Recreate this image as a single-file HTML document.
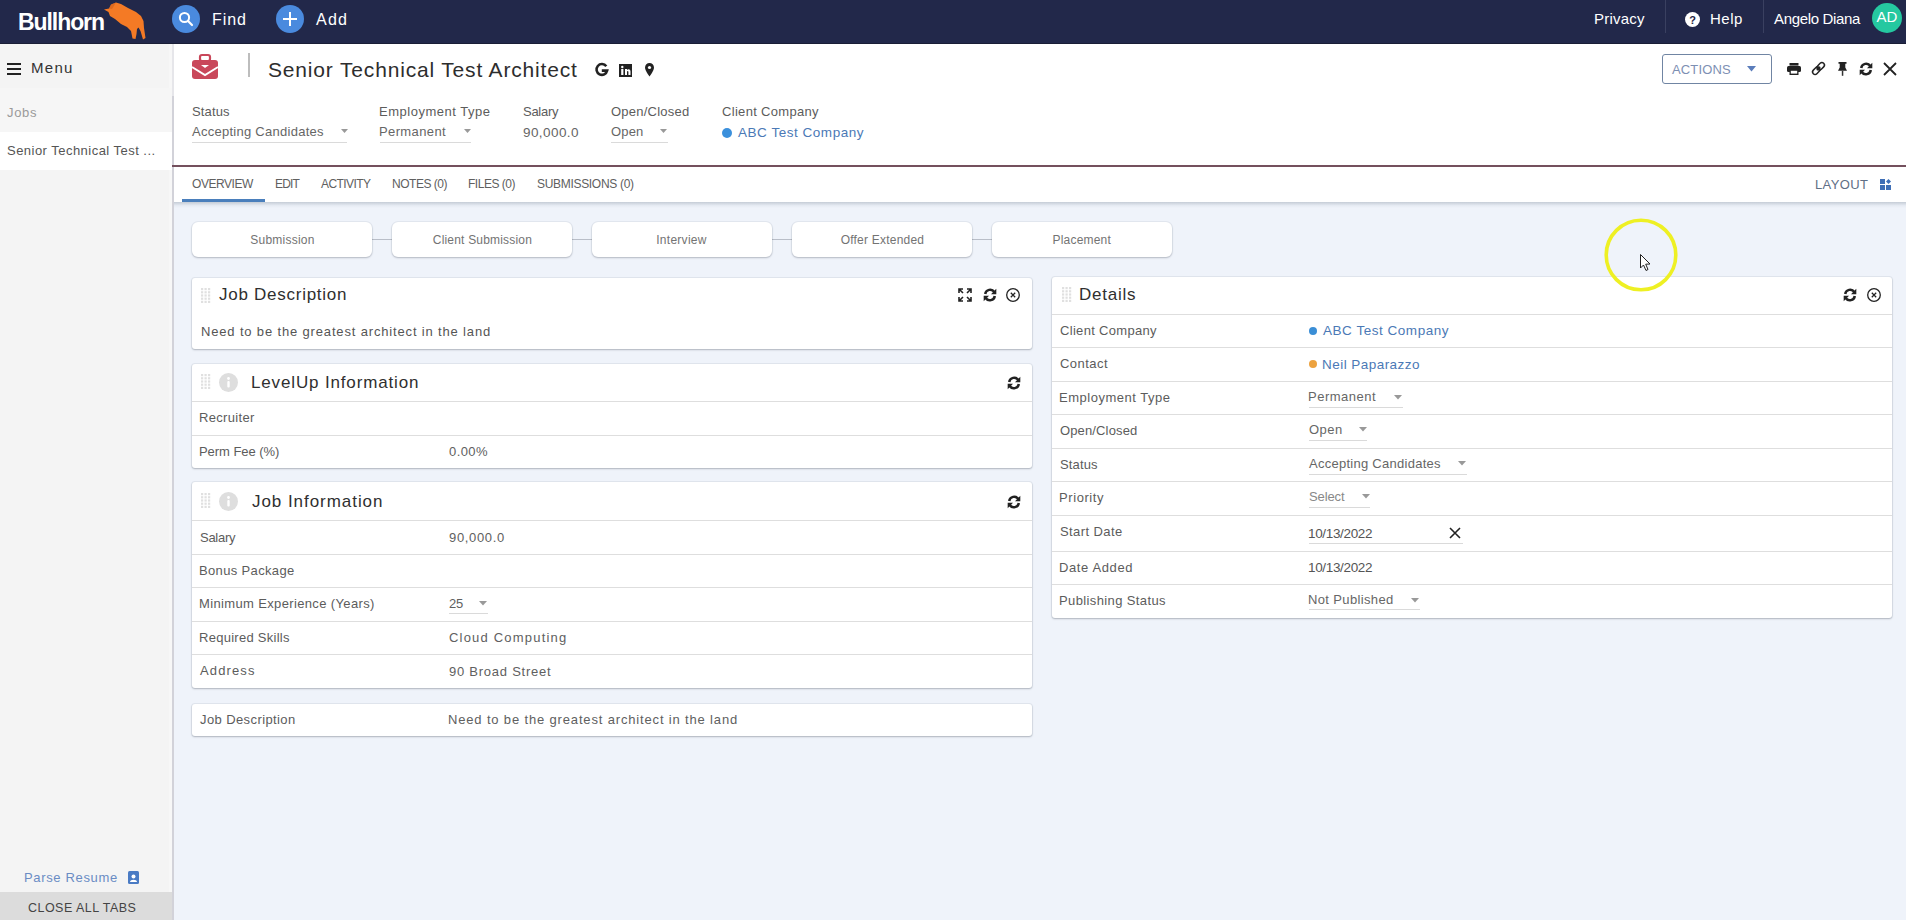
<!DOCTYPE html>
<html><head><meta charset="utf-8"><title>Bullhorn</title>
<style>
html,body{margin:0;padding:0;width:1906px;height:920px;overflow:hidden;background:#eff3fa;}
body{position:relative;font-family:"Liberation Sans", sans-serif;}
.t{position:absolute;white-space:nowrap;line-height:1;font-family:"Liberation Sans", sans-serif;}
.r{position:absolute;box-sizing:border-box;}
svg.r{overflow:visible;}
.stage{background:#fff;border-radius:6px;box-shadow:0 1px 2px rgba(40,45,60,.26),0 0 0 1px rgba(40,50,70,.05);}
.card{background:#fff;border-radius:3px;box-shadow:0 1px 2px rgba(40,45,60,.28),0 0 0 1px rgba(40,50,70,.06);}
</style></head><body>
<div class="r" style="left:0px;top:0px;width:1906px;height:920px;background:#eff3fa;"></div>
<div class="r" style="left:0px;top:0px;width:1906px;height:44px;background:#22284a;"></div>
<div class="r" style="left:0px;top:43px;width:1906px;height:1px;background:#1a1e36;"></div>
<div class="r" style="left:0px;top:44px;width:172px;height:876px;background:#f4f4f4;"></div>
<div class="r" style="left:169px;top:44px;width:3px;height:876px;background:#f7f7f7;"></div>
<div class="r" style="left:172px;top:44px;width:2px;height:876px;background:#d2d2d9;"></div>
<div class="r" style="left:172px;top:44px;width:2px;height:52px;background:#e6e6ea;"></div>
<div class="r" style="left:0px;top:88px;width:172px;height:44px;background:#f6f6f6;"></div>
<div class="r" style="left:0px;top:132px;width:172px;height:38px;background:#ffffff;"></div>
<div class="r" style="left:0px;top:892px;width:172px;height:28px;background:#dcdcdc;"></div>
<div class="r" style="left:174px;top:44px;width:1732px;height:121px;background:#ffffff;"></div>
<div class="r" style="left:174px;top:167px;width:1732px;height:35px;background:#ffffff;"></div>
<div class="r" style="left:172px;top:165px;width:1734px;height:2px;background:#74505d;"></div>
<div class="r" style="left:174px;top:202px;width:1732px;height:6px;background:linear-gradient(#c5ccd6,#e6ebf3 60%,#eff3fa)"></div>
<div class="t" style="left:18.00px;top:11px;font-size:23px;color:#ffffff;font-weight:700;letter-spacing:-1.070px;">Bullhorn</div>
<svg class="r" style="left:100px;top:0px;" width="50" height="44" viewBox="0 0 50 44"><path d="M4 9.5 L9 8.5 L11 4.5 L16 2.5 L21 4 L28 8 L36 12 L41 16 L43.5 21 L44 28 L45.5 38 L43 39.5 L40.5 31 L38.5 27.5 L37 29 L36.5 34 L35.5 39 L32.5 38.5 L31 31 L27 27 L21 24 L15 19 L10 16 L8.5 12 Z" fill="#f47a25"/><path d="M9 8.5 L11 4.5 L16 2.5 L12 9 Z" fill="#c85a1a" opacity="0.5"/></svg>
<svg class="r" style="left:172px;top:5px;" width="28" height="28" viewBox="0 0 28 28"><circle cx="14" cy="14" r="14" fill="#4a8ade"/><circle cx="12.5" cy="12.5" r="4.6" fill="none" stroke="#fff" stroke-width="2"/><line x1="16" y1="16" x2="20" y2="20" stroke="#fff" stroke-width="2.2" stroke-linecap="round"/></svg>
<div class="t" style="left:212.00px;top:12px;font-size:16px;color:#ffffff;letter-spacing:0.924px;">Find</div>
<svg class="r" style="left:276px;top:5px;" width="28" height="28" viewBox="0 0 28 28"><circle cx="14" cy="14" r="14" fill="#4a8ade"/><line x1="7" y1="14" x2="21" y2="14" stroke="#fff" stroke-width="2"/><line x1="14" y1="7" x2="14" y2="21" stroke="#fff" stroke-width="2"/></svg>
<div class="t" style="left:316.00px;top:12px;font-size:16px;color:#ffffff;letter-spacing:1.215px;">Add</div>
<div class="t" style="left:1594.00px;top:11px;font-size:15px;color:#ffffff;letter-spacing:0.221px;">Privacy</div>
<div class="r" style="left:1665px;top:0px;width:1px;height:33px;background:#3a4060;"></div>
<svg class="r" style="left:1685px;top:12px;" width="15" height="15" viewBox="0 0 15 15"><circle cx="7.5" cy="7.5" r="7.5" fill="#fff"/><text x="7.5" y="12" text-anchor="middle" font-family="Liberation Sans" font-weight="700" font-size="11" fill="#1e2443">?</text></svg>
<div class="t" style="left:1710.00px;top:11px;font-size:15px;color:#ffffff;letter-spacing:0.498px;">Help</div>
<div class="r" style="left:1763px;top:0px;width:1px;height:33px;background:#3a4060;"></div>
<div class="t" style="left:1774.00px;top:11px;font-size:15px;color:#ffffff;letter-spacing:-0.339px;">Angelo Diana</div>
<svg class="r" style="left:1872px;top:3px;" width="30" height="30" viewBox="0 0 30 30"><circle cx="15" cy="15" r="15" fill="#25c8a0"/><text x="15" y="19" text-anchor="middle" font-family="Liberation Sans" font-size="15" fill="#fff">AD</text></svg>
<svg class="r" style="left:7px;top:63px;" width="15" height="12" viewBox="0 0 15 12"><rect x="0" y="0" width="14" height="2" fill="#222"/><rect x="0" y="5" width="14" height="2" fill="#222"/><rect x="0" y="10" width="14" height="2" fill="#222"/></svg>
<div class="t" style="left:31.00px;top:60px;font-size:15px;color:#333;letter-spacing:1.273px;">Menu</div>
<div class="t" style="left:7.00px;top:106px;font-size:13px;color:#9a9a9a;letter-spacing:0.680px;">Jobs</div>
<div class="t" style="left:7.00px;top:144px;font-size:13px;color:#555;letter-spacing:0.472px;">Senior Technical Test ...</div>
<div class="t" style="left:24.00px;top:871px;font-size:13px;color:#6a8cc4;letter-spacing:0.659px;">Parse Resume</div>
<svg class="r" style="left:128px;top:871px;" width="11" height="13" viewBox="0 0 11 13"><rect x="0" y="0" width="11" height="13" rx="1.5" fill="#4a7bc4"/><circle cx="5.5" cy="5.5" r="2" fill="#fff"/><path d="M2 11 C2 8 9 8 9 11 Z" fill="#fff"/></svg>
<div class="t" style="left:28.00px;top:902px;font-size:12.5px;color:#444;letter-spacing:0.466px;">CLOSE ALL TABS</div>
<svg class="r" style="left:192px;top:54px;" width="26" height="25" viewBox="0 0 26 25"><rect x="8" y="1" width="10" height="6" rx="2" fill="none" stroke="#c9475a" stroke-width="2.2"/><rect x="0" y="6" width="26" height="19" rx="3" fill="#c9475a"/><path d="M0 13 L13 21 L26 13" fill="none" stroke="#fff" stroke-width="2"/><path d="M9 11 L17 11 L13 14 Z" fill="#fff"/></svg>
<div class="r" style="left:248px;top:53px;width:2px;height:24px;background:#bdbdbd;"></div>
<div class="t" style="left:268.00px;top:59px;font-size:21px;color:#2d2d2d;letter-spacing:0.829px;">Senior Technical Test Architect</div>
<svg class="r" style="left:595px;top:63px;" width="13" height="14" viewBox="0 0 13 14"><path d="M11.3 3.3 A5.4 5.4 0 1 0 12.2 7.6 L6.8 7.6" fill="none" stroke="#222" stroke-width="2.6"/></svg>
<svg class="r" style="left:619px;top:63.5px;" width="13" height="13" viewBox="0 0 13 13"><rect x="0" y="0" width="13" height="13" fill="#222"/><rect x="2.2" y="5" width="2.2" height="6" fill="#fff"/><circle cx="3.3" cy="3" r="1.2" fill="#fff"/><path d="M6 11 V5 H8 V6 C9 4.6 11.5 4.8 11.5 7.4 V11 H9.4 V7.8 C9.4 6.6 8 6.6 8 7.8 V11 Z" fill="#fff"/></svg>
<svg class="r" style="left:645px;top:63px;" width="9" height="14" viewBox="0 0 9 14"><path d="M4.5 0 C2 0 0 2 0 4.6 C0 7.8 4.5 13.5 4.5 13.5 C4.5 13.5 9 7.8 9 4.6 C9 2 7 0 4.5 0 Z" fill="#222"/><circle cx="4.5" cy="4.5" r="1.6" fill="#fff"/></svg>
<div class="t" style="left:192.00px;top:105px;font-size:13px;color:#5c5c5c;letter-spacing:0.129px;">Status</div>
<div class="t" style="left:192.00px;top:125px;font-size:13px;color:#666;letter-spacing:0.265px;">Accepting Candidates</div>
<svg class="r" style="left:341px;top:129px;" width="7" height="5" viewBox="0 0 7 5"><path d="M0 0 L7 0 L3.5 4 Z" fill="#999"/></svg>
<div class="r" style="left:192px;top:142px;width:155px;height:1px;background:#dadada;"></div>
<div class="t" style="left:379.00px;top:105px;font-size:13px;color:#5c5c5c;letter-spacing:0.513px;">Employment Type</div>
<div class="t" style="left:379.00px;top:125px;font-size:13px;color:#666;letter-spacing:0.378px;">Permanent</div>
<svg class="r" style="left:464px;top:129px;" width="7" height="5" viewBox="0 0 7 5"><path d="M0 0 L7 0 L3.5 4 Z" fill="#999"/></svg>
<div class="r" style="left:380px;top:142px;width:91px;height:1px;background:#dadada;"></div>
<div class="t" style="left:523.00px;top:105px;font-size:13px;color:#5c5c5c;letter-spacing:-0.270px;">Salary</div>
<div class="t" style="left:523.00px;top:126px;font-size:13.5px;color:#666;letter-spacing:0.423px;">90,000.0</div>
<div class="t" style="left:611.00px;top:105px;font-size:13px;color:#5c5c5c;letter-spacing:0.235px;">Open/Closed</div>
<div class="t" style="left:611.00px;top:125px;font-size:13px;color:#666;letter-spacing:0.143px;">Open</div>
<svg class="r" style="left:660px;top:129px;" width="7" height="5" viewBox="0 0 7 5"><path d="M0 0 L7 0 L3.5 4 Z" fill="#999"/></svg>
<div class="r" style="left:611px;top:142px;width:57px;height:1px;background:#dadada;"></div>
<div class="t" style="left:722.00px;top:105px;font-size:13px;color:#5c5c5c;letter-spacing:0.309px;">Client Company</div>
<svg class="r" style="left:722px;top:128px;" width="10" height="10" viewBox="0 0 10 10"><circle cx="5" cy="5" r="5" fill="#3b90dc"/></svg>
<div class="t" style="left:738.00px;top:126px;font-size:13.5px;color:#4b79b6;letter-spacing:0.530px;">ABC Test Company</div>
<div class="r" style="left:1662px;top:54px;width:110px;height:30px;border:1px solid #7085a3;border-radius:3px;background:#fff"></div>
<div class="t" style="left:1672.00px;top:63px;font-size:13px;color:#7d8fb3;letter-spacing:0.148px;">ACTIONS</div>
<svg class="r" style="left:1747px;top:66px;" width="9" height="6" viewBox="0 0 9 6"><path d="M0 0 L9 0 L4.5 5.5 Z" fill="#5b7dbb"/></svg>
<svg class="r" style="left:1787px;top:63px;" width="14" height="12" viewBox="0 0 14 12"><rect x="2.5" y="0" width="9" height="2.6" fill="#222"/><rect x="0" y="3" width="14" height="6" rx="1.5" fill="#222"/><rect x="2.5" y="6.5" width="9" height="5.5" fill="#222"/><rect x="3.8" y="7.8" width="6.4" height="2.8" fill="#fff"/></svg>
<svg class="r" style="left:1812px;top:62px;" width="13" height="13" viewBox="0 0 13 13"><g fill="none" stroke="#222" stroke-width="1.5" transform="rotate(-45 6.5 6.5)"><rect x="-0.8" y="4" width="8.3" height="5" rx="2.5"/><rect x="5.5" y="4" width="8.3" height="5" rx="2.5"/></g><path d="M4.8 8.2 L8.2 4.8" stroke="#222" stroke-width="1.5"/></svg>
<svg class="r" style="left:1838px;top:62px;" width="9" height="14" viewBox="0 0 9 14"><path d="M0.5 0 H8.5 V1.8 H7.3 V5.5 L9 8.8 H0 L1.7 5.5 V1.8 H0.5 Z" fill="#222"/><rect x="3.8" y="8.8" width="1.5" height="5" fill="#333"/></svg>
<svg class="r" style="left:1859px;top:62px;" width="14" height="14" viewBox="0 0 14 14"><g transform="scale(1.0)"><path d="M2.2 6 A5 5 0 0 1 11.3 4" fill="none" stroke="#222" stroke-width="2.5"/><path d="M13.3 0.8 L13.3 6.2 L8 6.2 Z" fill="#222"/><path d="M11.8 8 A5 5 0 0 1 2.7 10" fill="none" stroke="#222" stroke-width="2.5"/><path d="M0.7 13.2 L0.7 7.8 L6 7.8 Z" fill="#222"/></g></svg>
<svg class="r" style="left:1883px;top:62px;" width="14" height="14" viewBox="0 0 14 14"><path d="M1 1 L13 13 M13 1 L1 13" stroke="#222" stroke-width="1.8"/></svg>
<div class="t" style="left:192.00px;top:178px;font-size:12px;color:#606060;letter-spacing:-0.448px;">OVERVIEW</div>
<div class="t" style="left:275.00px;top:178px;font-size:12px;color:#606060;letter-spacing:-0.835px;">EDIT</div>
<div class="t" style="left:321.00px;top:178px;font-size:12px;color:#606060;letter-spacing:-0.572px;">ACTIVITY</div>
<div class="t" style="left:392.00px;top:178px;font-size:12px;color:#606060;letter-spacing:-0.480px;">NOTES (0)</div>
<div class="t" style="left:468.00px;top:178px;font-size:12px;color:#606060;letter-spacing:-0.481px;">FILES (0)</div>
<div class="t" style="left:537.00px;top:178px;font-size:12px;color:#606060;letter-spacing:-0.311px;">SUBMISSIONS (0)</div>
<div class="r" style="left:182px;top:199px;width:83px;height:3px;background:#4a7fbc;"></div>
<div class="t" style="left:1815.00px;top:178px;font-size:13px;color:#5f6f86;letter-spacing:0.379px;">LAYOUT</div>
<svg class="r" style="left:1880px;top:179px;" width="11" height="11" viewBox="0 0 11 11"><rect x="0" y="0" width="5" height="5" fill="#3f6fb6"/><rect x="0" y="6" width="5" height="5" fill="#3f6fb6"/><rect x="6" y="6" width="5" height="5" fill="#3f6fb6"/><path d="M8.5 0 L11 2.5 L8.5 5 L6 2.5 Z" fill="#3f6fb6"/></svg>
<div class="r" style="left:372px;top:239px;width:20px;height:1px;background:#b9bec8;"></div>
<div class="r stage" style="left:192px;top:222px;width:180px;height:35px;"></div>
<div class="t" style="left:250.25px;top:234px;font-size:12px;color:#737373;letter-spacing:0.238px;">Submission</div>
<div class="r" style="left:572px;top:239px;width:20px;height:1px;background:#b9bec8;"></div>
<div class="r stage" style="left:392px;top:222px;width:180px;height:35px;"></div>
<div class="t" style="left:432.80px;top:234px;font-size:12px;color:#737373;letter-spacing:0.190px;">Client Submission</div>
<div class="r" style="left:772px;top:239px;width:20px;height:1px;background:#b9bec8;"></div>
<div class="r stage" style="left:592px;top:222px;width:180px;height:35px;"></div>
<div class="t" style="left:656.25px;top:234px;font-size:12px;color:#737373;letter-spacing:0.269px;">Interview</div>
<div class="r" style="left:972px;top:239px;width:20px;height:1px;background:#b9bec8;"></div>
<div class="r stage" style="left:792px;top:222px;width:180px;height:35px;"></div>
<div class="t" style="left:840.70px;top:234px;font-size:12px;color:#737373;letter-spacing:0.214px;">Offer Extended</div>
<div class="r stage" style="left:992px;top:222px;width:180px;height:35px;"></div>
<div class="t" style="left:1052.50px;top:234px;font-size:12px;color:#737373;letter-spacing:0.205px;">Placement</div>
<div class="r card" style="left:192px;top:278px;width:840px;height:71px;"></div>
<svg class="r" style="left:201px;top:288px;" width="10" height="16" viewBox="0 0 10 16"><rect x="0.0" y="0.0" width="2.2" height="2.2" fill="#e0e0e0"/><rect x="3.5" y="0.0" width="2.2" height="2.2" fill="#e0e0e0"/><rect x="7.0" y="0.0" width="2.2" height="2.2" fill="#e0e0e0"/><rect x="0.0" y="3.2" width="2.2" height="2.2" fill="#e0e0e0"/><rect x="3.5" y="3.2" width="2.2" height="2.2" fill="#e0e0e0"/><rect x="7.0" y="3.2" width="2.2" height="2.2" fill="#e0e0e0"/><rect x="0.0" y="6.4" width="2.2" height="2.2" fill="#e0e0e0"/><rect x="3.5" y="6.4" width="2.2" height="2.2" fill="#e0e0e0"/><rect x="7.0" y="6.4" width="2.2" height="2.2" fill="#e0e0e0"/><rect x="0.0" y="9.600000000000001" width="2.2" height="2.2" fill="#e0e0e0"/><rect x="3.5" y="9.600000000000001" width="2.2" height="2.2" fill="#e0e0e0"/><rect x="7.0" y="9.600000000000001" width="2.2" height="2.2" fill="#e0e0e0"/><rect x="0.0" y="12.8" width="2.2" height="2.2" fill="#e0e0e0"/><rect x="3.5" y="12.8" width="2.2" height="2.2" fill="#e0e0e0"/><rect x="7.0" y="12.8" width="2.2" height="2.2" fill="#e0e0e0"/></svg>
<div class="t" style="left:219.00px;top:286px;font-size:17px;color:#2f2f2f;letter-spacing:0.735px;">Job Description</div>
<svg class="r" style="left:958px;top:288px;" width="14" height="14" viewBox="0 0 14 14"><g fill="none" stroke="#222" stroke-width="1.6"><path d="M1 5 V1 H5 M1 1 L5 5"/><path d="M9 1 H13 V5 M13 1 L9 5"/><path d="M1 9 V13 H5 M1 13 L5 9"/><path d="M13 9 V13 H9 M13 13 L9 9"/></g></svg>
<svg class="r" style="left:983px;top:288px;" width="14" height="14" viewBox="0 0 14 14"><g transform="scale(1.0)"><path d="M2.2 6 A5 5 0 0 1 11.3 4" fill="none" stroke="#222" stroke-width="2.5"/><path d="M13.3 0.8 L13.3 6.2 L8 6.2 Z" fill="#222"/><path d="M11.8 8 A5 5 0 0 1 2.7 10" fill="none" stroke="#222" stroke-width="2.5"/><path d="M0.7 13.2 L0.7 7.8 L6 7.8 Z" fill="#222"/></g></svg>
<svg class="r" style="left:1006px;top:288px;" width="14" height="14" viewBox="0 0 14 14"><circle cx="7" cy="7" r="6.3" fill="none" stroke="#222" stroke-width="1.3"/><path d="M4.8 4.8 L9.2 9.2 M9.2 4.8 L4.8 9.2" stroke="#222" stroke-width="1.25"/></svg>
<div class="t" style="left:201.00px;top:325px;font-size:13px;color:#555;letter-spacing:0.841px;">Need to be the greatest architect in the land</div>
<div class="r card" style="left:192px;top:364px;width:840px;height:104px;"></div>
<svg class="r" style="left:201px;top:374px;" width="10" height="16" viewBox="0 0 10 16"><rect x="0.0" y="0.0" width="2.2" height="2.2" fill="#e0e0e0"/><rect x="3.5" y="0.0" width="2.2" height="2.2" fill="#e0e0e0"/><rect x="7.0" y="0.0" width="2.2" height="2.2" fill="#e0e0e0"/><rect x="0.0" y="3.2" width="2.2" height="2.2" fill="#e0e0e0"/><rect x="3.5" y="3.2" width="2.2" height="2.2" fill="#e0e0e0"/><rect x="7.0" y="3.2" width="2.2" height="2.2" fill="#e0e0e0"/><rect x="0.0" y="6.4" width="2.2" height="2.2" fill="#e0e0e0"/><rect x="3.5" y="6.4" width="2.2" height="2.2" fill="#e0e0e0"/><rect x="7.0" y="6.4" width="2.2" height="2.2" fill="#e0e0e0"/><rect x="0.0" y="9.600000000000001" width="2.2" height="2.2" fill="#e0e0e0"/><rect x="3.5" y="9.600000000000001" width="2.2" height="2.2" fill="#e0e0e0"/><rect x="7.0" y="9.600000000000001" width="2.2" height="2.2" fill="#e0e0e0"/><rect x="0.0" y="12.8" width="2.2" height="2.2" fill="#e0e0e0"/><rect x="3.5" y="12.8" width="2.2" height="2.2" fill="#e0e0e0"/><rect x="7.0" y="12.8" width="2.2" height="2.2" fill="#e0e0e0"/></svg>
<svg class="r" style="left:219px;top:373px;" width="19" height="19" viewBox="0 0 19 19"><circle cx="9.5" cy="9.5" r="9.5" fill="#dedede"/><circle cx="9.5" cy="5.5" r="1.4" fill="#fff"/><rect x="8.3" y="8" width="2.4" height="6.5" rx="1" fill="#fff"/></svg>
<div class="t" style="left:251.00px;top:374px;font-size:17px;color:#2f2f2f;letter-spacing:0.851px;">LevelUp Information</div>
<svg class="r" style="left:1007px;top:376px;" width="14" height="14" viewBox="0 0 14 14"><g transform="scale(1.0)"><path d="M2.2 6 A5 5 0 0 1 11.3 4" fill="none" stroke="#222" stroke-width="2.5"/><path d="M13.3 0.8 L13.3 6.2 L8 6.2 Z" fill="#222"/><path d="M11.8 8 A5 5 0 0 1 2.7 10" fill="none" stroke="#222" stroke-width="2.5"/><path d="M0.7 13.2 L0.7 7.8 L6 7.8 Z" fill="#222"/></g></svg>
<div class="r" style="left:192px;top:401px;width:840px;height:1px;background:#dedede;"></div>
<div class="r" style="left:192px;top:435px;width:840px;height:1px;background:#dedede;"></div>
<div class="t" style="left:199.00px;top:411px;font-size:13px;color:#5c5c5c;letter-spacing:0.324px;">Recruiter</div>
<div class="t" style="left:199.00px;top:445px;font-size:13px;color:#5c5c5c;letter-spacing:-0.052px;">Perm Fee (%)</div>
<div class="t" style="left:449.00px;top:445px;font-size:13px;color:#606060;letter-spacing:0.425px;">0.00%</div>
<div class="r card" style="left:192px;top:482px;width:840px;height:206px;"></div>
<svg class="r" style="left:201px;top:493px;" width="10" height="16" viewBox="0 0 10 16"><rect x="0.0" y="0.0" width="2.2" height="2.2" fill="#e0e0e0"/><rect x="3.5" y="0.0" width="2.2" height="2.2" fill="#e0e0e0"/><rect x="7.0" y="0.0" width="2.2" height="2.2" fill="#e0e0e0"/><rect x="0.0" y="3.2" width="2.2" height="2.2" fill="#e0e0e0"/><rect x="3.5" y="3.2" width="2.2" height="2.2" fill="#e0e0e0"/><rect x="7.0" y="3.2" width="2.2" height="2.2" fill="#e0e0e0"/><rect x="0.0" y="6.4" width="2.2" height="2.2" fill="#e0e0e0"/><rect x="3.5" y="6.4" width="2.2" height="2.2" fill="#e0e0e0"/><rect x="7.0" y="6.4" width="2.2" height="2.2" fill="#e0e0e0"/><rect x="0.0" y="9.600000000000001" width="2.2" height="2.2" fill="#e0e0e0"/><rect x="3.5" y="9.600000000000001" width="2.2" height="2.2" fill="#e0e0e0"/><rect x="7.0" y="9.600000000000001" width="2.2" height="2.2" fill="#e0e0e0"/><rect x="0.0" y="12.8" width="2.2" height="2.2" fill="#e0e0e0"/><rect x="3.5" y="12.8" width="2.2" height="2.2" fill="#e0e0e0"/><rect x="7.0" y="12.8" width="2.2" height="2.2" fill="#e0e0e0"/></svg>
<svg class="r" style="left:219px;top:492px;" width="19" height="19" viewBox="0 0 19 19"><circle cx="9.5" cy="9.5" r="9.5" fill="#dedede"/><circle cx="9.5" cy="5.5" r="1.4" fill="#fff"/><rect x="8.3" y="8" width="2.4" height="6.5" rx="1" fill="#fff"/></svg>
<div class="t" style="left:252.00px;top:493px;font-size:17px;color:#2f2f2f;letter-spacing:0.949px;">Job Information</div>
<svg class="r" style="left:1007px;top:495px;" width="14" height="14" viewBox="0 0 14 14"><g transform="scale(1.0)"><path d="M2.2 6 A5 5 0 0 1 11.3 4" fill="none" stroke="#222" stroke-width="2.5"/><path d="M13.3 0.8 L13.3 6.2 L8 6.2 Z" fill="#222"/><path d="M11.8 8 A5 5 0 0 1 2.7 10" fill="none" stroke="#222" stroke-width="2.5"/><path d="M0.7 13.2 L0.7 7.8 L6 7.8 Z" fill="#222"/></g></svg>
<div class="r" style="left:192px;top:520px;width:840px;height:1px;background:#dedede;"></div>
<div class="r" style="left:192px;top:554px;width:840px;height:1px;background:#dedede;"></div>
<div class="r" style="left:192px;top:587px;width:840px;height:1px;background:#dedede;"></div>
<div class="r" style="left:192px;top:621px;width:840px;height:1px;background:#dedede;"></div>
<div class="r" style="left:192px;top:654px;width:840px;height:1px;background:#dedede;"></div>
<div class="t" style="left:200.00px;top:531px;font-size:13px;color:#5c5c5c;letter-spacing:-0.270px;">Salary</div>
<div class="t" style="left:449.00px;top:531px;font-size:13px;color:#606060;letter-spacing:0.661px;">90,000.0</div>
<div class="t" style="left:199.00px;top:564px;font-size:13px;color:#5c5c5c;letter-spacing:0.347px;">Bonus Package</div>
<div class="t" style="left:199.00px;top:597px;font-size:13px;color:#5c5c5c;letter-spacing:0.357px;">Minimum Experience (Years)</div>
<div class="t" style="left:449.00px;top:597px;font-size:13px;color:#606060;letter-spacing:-0.230px;">25</div>
<svg class="r" style="left:479px;top:601px;" width="8" height="5" viewBox="0 0 8 5"><path d="M0 0 L8 0 L4 4.5 Z" fill="#999"/></svg>
<div class="r" style="left:449px;top:613px;width:39px;height:1px;background:#dadada;"></div>
<div class="t" style="left:199.00px;top:631px;font-size:13px;color:#5c5c5c;letter-spacing:0.271px;">Required Skills</div>
<div class="t" style="left:449.00px;top:631px;font-size:13px;color:#606060;letter-spacing:1.199px;">Cloud Computing</div>
<div class="t" style="left:200.00px;top:664px;font-size:13px;color:#5c5c5c;letter-spacing:1.135px;">Address</div>
<div class="t" style="left:449.00px;top:665px;font-size:13px;color:#606060;letter-spacing:0.754px;">90 Broad Street</div>
<div class="r card" style="left:192px;top:704px;width:840px;height:32px;"></div>
<div class="t" style="left:200.00px;top:713px;font-size:13px;color:#5c5c5c;letter-spacing:0.402px;">Job Description</div>
<div class="t" style="left:448.00px;top:713px;font-size:13px;color:#606060;letter-spacing:0.841px;">Need to be the greatest architect in the land</div>
<div class="r card" style="left:1052px;top:277px;width:840px;height:341px;"></div>
<svg class="r" style="left:1062px;top:287px;" width="10" height="16" viewBox="0 0 10 16"><rect x="0.0" y="0.0" width="2.2" height="2.2" fill="#e0e0e0"/><rect x="3.5" y="0.0" width="2.2" height="2.2" fill="#e0e0e0"/><rect x="7.0" y="0.0" width="2.2" height="2.2" fill="#e0e0e0"/><rect x="0.0" y="3.2" width="2.2" height="2.2" fill="#e0e0e0"/><rect x="3.5" y="3.2" width="2.2" height="2.2" fill="#e0e0e0"/><rect x="7.0" y="3.2" width="2.2" height="2.2" fill="#e0e0e0"/><rect x="0.0" y="6.4" width="2.2" height="2.2" fill="#e0e0e0"/><rect x="3.5" y="6.4" width="2.2" height="2.2" fill="#e0e0e0"/><rect x="7.0" y="6.4" width="2.2" height="2.2" fill="#e0e0e0"/><rect x="0.0" y="9.600000000000001" width="2.2" height="2.2" fill="#e0e0e0"/><rect x="3.5" y="9.600000000000001" width="2.2" height="2.2" fill="#e0e0e0"/><rect x="7.0" y="9.600000000000001" width="2.2" height="2.2" fill="#e0e0e0"/><rect x="0.0" y="12.8" width="2.2" height="2.2" fill="#e0e0e0"/><rect x="3.5" y="12.8" width="2.2" height="2.2" fill="#e0e0e0"/><rect x="7.0" y="12.8" width="2.2" height="2.2" fill="#e0e0e0"/></svg>
<div class="t" style="left:1079.00px;top:286px;font-size:17px;color:#2f2f2f;letter-spacing:0.756px;">Details</div>
<svg class="r" style="left:1843px;top:288px;" width="14" height="14" viewBox="0 0 14 14"><g transform="scale(1.0)"><path d="M2.2 6 A5 5 0 0 1 11.3 4" fill="none" stroke="#222" stroke-width="2.5"/><path d="M13.3 0.8 L13.3 6.2 L8 6.2 Z" fill="#222"/><path d="M11.8 8 A5 5 0 0 1 2.7 10" fill="none" stroke="#222" stroke-width="2.5"/><path d="M0.7 13.2 L0.7 7.8 L6 7.8 Z" fill="#222"/></g></svg>
<svg class="r" style="left:1867px;top:288px;" width="14" height="14" viewBox="0 0 14 14"><circle cx="7" cy="7" r="6.3" fill="none" stroke="#222" stroke-width="1.3"/><path d="M4.8 4.8 L9.2 9.2 M9.2 4.8 L4.8 9.2" stroke="#222" stroke-width="1.25"/></svg>
<div class="r" style="left:1052px;top:314px;width:840px;height:1px;background:#dedede;"></div>
<div class="r" style="left:1052px;top:347px;width:840px;height:1px;background:#dedede;"></div>
<div class="r" style="left:1052px;top:381px;width:840px;height:1px;background:#dedede;"></div>
<div class="r" style="left:1052px;top:414px;width:840px;height:1px;background:#dedede;"></div>
<div class="r" style="left:1052px;top:448px;width:840px;height:1px;background:#dedede;"></div>
<div class="r" style="left:1052px;top:481px;width:840px;height:1px;background:#dedede;"></div>
<div class="r" style="left:1052px;top:515px;width:840px;height:1px;background:#dedede;"></div>
<div class="r" style="left:1052px;top:551px;width:840px;height:1px;background:#dedede;"></div>
<div class="r" style="left:1052px;top:584px;width:840px;height:1px;background:#dedede;"></div>
<div class="t" style="left:1060.00px;top:324px;font-size:13px;color:#5c5c5c;letter-spacing:0.309px;">Client Company</div>
<div class="t" style="left:1060.00px;top:357px;font-size:13px;color:#5c5c5c;letter-spacing:0.468px;">Contact</div>
<div class="t" style="left:1059.00px;top:391px;font-size:13px;color:#5c5c5c;letter-spacing:0.513px;">Employment Type</div>
<div class="t" style="left:1060.00px;top:424px;font-size:13px;color:#5c5c5c;letter-spacing:0.135px;">Open/Closed</div>
<div class="t" style="left:1060.00px;top:458px;font-size:13px;color:#5c5c5c;letter-spacing:0.129px;">Status</div>
<div class="t" style="left:1059.00px;top:491px;font-size:13px;color:#5c5c5c;letter-spacing:0.579px;">Priority</div>
<div class="t" style="left:1060.00px;top:525px;font-size:13px;color:#5c5c5c;letter-spacing:0.412px;">Start Date</div>
<div class="t" style="left:1059.00px;top:561px;font-size:13px;color:#5c5c5c;letter-spacing:0.619px;">Date Added</div>
<div class="t" style="left:1059.00px;top:594px;font-size:13px;color:#5c5c5c;letter-spacing:0.378px;">Publishing Status</div>
<svg class="r" style="left:1309px;top:327px;" width="8" height="8" viewBox="0 0 8 8"><circle cx="4" cy="4" r="4" fill="#3a8ed6"/></svg>
<div class="t" style="left:1323.00px;top:324px;font-size:13.5px;color:#4b79b6;letter-spacing:0.530px;">ABC Test Company</div>
<svg class="r" style="left:1309px;top:360px;" width="8" height="8" viewBox="0 0 8 8"><circle cx="4" cy="4" r="4" fill="#eca23f"/></svg>
<div class="t" style="left:1322.00px;top:358px;font-size:13.5px;color:#4b79b6;letter-spacing:0.459px;">Neil Paparazzo</div>
<div class="t" style="left:1308.00px;top:390px;font-size:13px;color:#666;letter-spacing:0.503px;">Permanent</div>
<svg class="r" style="left:1394px;top:395px;" width="8" height="5" viewBox="0 0 8 5"><path d="M0 0 L8 0 L4 4.5 Z" fill="#999"/></svg>
<div class="r" style="left:1309px;top:407px;width:94px;height:1px;background:#dadada;"></div>
<div class="t" style="left:1309.00px;top:423px;font-size:13px;color:#666;letter-spacing:0.476px;">Open</div>
<svg class="r" style="left:1359px;top:427px;" width="8" height="5" viewBox="0 0 8 5"><path d="M0 0 L8 0 L4 4.5 Z" fill="#999"/></svg>
<div class="r" style="left:1309px;top:440px;width:58px;height:1px;background:#dadada;"></div>
<div class="t" style="left:1309.00px;top:457px;font-size:13px;color:#666;letter-spacing:0.265px;">Accepting Candidates</div>
<svg class="r" style="left:1458px;top:461px;" width="8" height="5" viewBox="0 0 8 5"><path d="M0 0 L8 0 L4 4.5 Z" fill="#999"/></svg>
<div class="r" style="left:1309px;top:474px;width:158px;height:1px;background:#dadada;"></div>
<div class="t" style="left:1309.00px;top:490px;font-size:13px;color:#888;letter-spacing:-0.104px;">Select</div>
<svg class="r" style="left:1362px;top:494px;" width="8" height="5" viewBox="0 0 8 5"><path d="M0 0 L8 0 L4 4.5 Z" fill="#999"/></svg>
<div class="r" style="left:1309px;top:507px;width:61px;height:1px;background:#dadada;"></div>
<div class="t" style="left:1308.00px;top:527px;font-size:13.5px;color:#555;letter-spacing:-0.340px;">10/13/2022</div>
<svg class="r" style="left:1449px;top:527px;" width="12" height="12" viewBox="0 0 12 12"><path d="M1 1 L11 11 M11 1 L1 11" stroke="#222" stroke-width="1.6"/></svg>
<div class="r" style="left:1309px;top:543px;width:154px;height:1px;background:#dadada;"></div>
<div class="t" style="left:1308.00px;top:561px;font-size:13.5px;color:#555;letter-spacing:-0.340px;">10/13/2022</div>
<div class="t" style="left:1308.00px;top:593px;font-size:13px;color:#666;letter-spacing:0.358px;">Not Published</div>
<svg class="r" style="left:1411px;top:598px;" width="8" height="5" viewBox="0 0 8 5"><path d="M0 0 L8 0 L4 4.5 Z" fill="#999"/></svg>
<div class="r" style="left:1309px;top:609px;width:111px;height:1px;background:#dadada;"></div>
<svg class="r" style="left:1600px;top:214px;" width="82" height="82" viewBox="0 0 82 82"><circle cx="41" cy="41" r="34.8" fill="none" stroke="#eef023" stroke-width="3.6"/></svg>
<svg class="r" style="left:1639px;top:253px;" width="14" height="20" viewBox="0 0 14 20"><path d="M1.5 1.5 L1.5 15 L4.5 12 L7 17.5 L9 16.5 L6.7 11.2 L11 11 Z" fill="#fff" stroke="#222" stroke-width="1"/></svg>
</body></html>
